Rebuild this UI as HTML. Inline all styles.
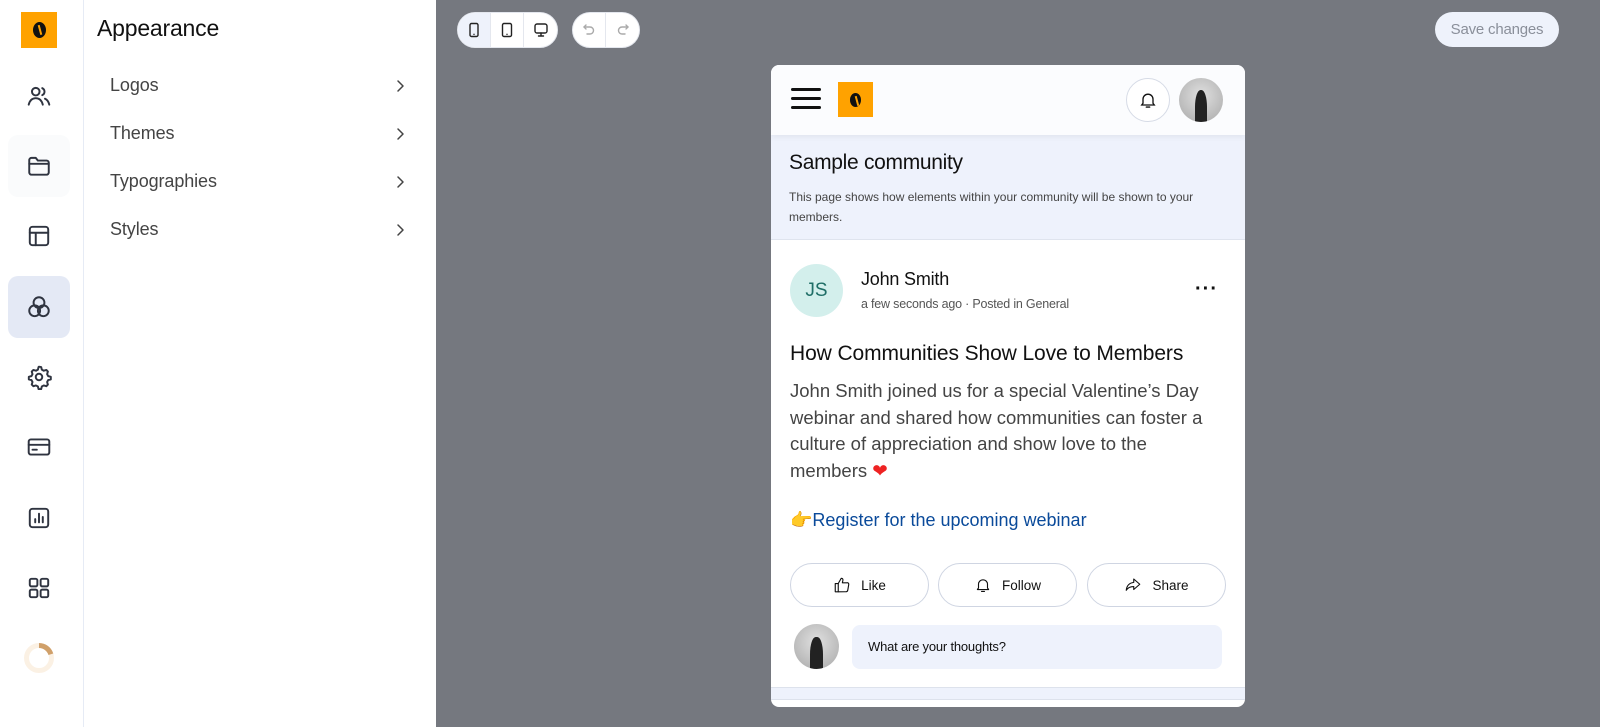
<!DOCTYPE html>
<html><head><meta charset="utf-8"><style>
*{box-sizing:border-box;margin:0;padding:0}
body{width:1600px;height:727px;overflow:hidden;font-family:"Liberation Sans",sans-serif;background:#75787f;position:relative}
.rail{position:absolute;left:0;top:0;width:84px;height:727px;background:#fff;border-right:1px solid #e6ebf5}
.panel{position:absolute;left:84px;top:0;width:352px;height:727px;background:#fff}
.ic{position:absolute;left:8px;width:62px;height:62px;border-radius:10px;display:flex;align-items:center;justify-content:center}
.ic svg{width:26px;height:26px;fill:none;stroke:#2f3440;stroke-width:1.8;stroke-linecap:round;stroke-linejoin:round}
.logo{position:absolute;left:21px;top:12px;width:36px;height:36px;background:#ffa200;display:flex;align-items:center;justify-content:center}
.bean{width:13px;height:16px;border-radius:50%;background:#111;position:relative}
.bean:after{content:"";position:absolute;left:6px;top:3px;width:1.5px;height:10px;background:#ffa200;transform:rotate(-15deg)}
h1{position:absolute;left:97px;top:15px;font-size:23px;font-weight:400;color:#111;letter-spacing:-.2px}
.item{position:absolute;left:110px;width:300px;font-size:18px;color:#444;letter-spacing:-.1px}
.item svg{position:absolute;right:5px;top:4px;width:10px;height:14px;fill:none;stroke:#444;stroke-width:1.5;stroke-linecap:round;stroke-linejoin:round}
.tb{position:absolute;top:12px;height:36px;background:#fff;border-radius:18px;display:flex;overflow:hidden;border:1px solid #e4e7ee}
.tb div{width:33px;height:34px;display:flex;align-items:center;justify-content:center;border-right:1px solid #e4e7ee}
.tb div:last-child{border-right:none}
.tb svg{width:16px;height:16px;fill:none;stroke:#222;stroke-width:1.4;stroke-linecap:round;stroke-linejoin:round}
.save{position:absolute;left:1435px;top:12px;width:124px;height:35px;border-radius:18px;background:#eef2fb;color:#8a8f9a;font-size:15px;display:flex;align-items:center;justify-content:center;letter-spacing:-.2px}
.phone{position:absolute;left:771px;top:65px;width:474px;height:642px;background:#fff;border-radius:8px;overflow:hidden}
.hdr{height:70px;background:#fbfcfe;position:relative;box-shadow:0 2px 6px rgba(0,0,0,.06)}
.ban{height:105px;background:#eef2fc;padding:16px 18px;border-bottom:1px solid #dfe4ee}
.ban .t{font-size:21px;color:#111;letter-spacing:-.3px}
.ban .d{font-size:12px;color:#444;line-height:20px;margin-top:12px;letter-spacing:0}
.btn{position:absolute;top:498px;width:139px;height:44px;border:1px solid #cfd5e2;border-radius:22px;display:flex;align-items:center;justify-content:center;gap:10px;font-size:13.5px;color:#111}
.btn svg{width:18px;height:18px;fill:none;stroke:#111;stroke-width:1.5;stroke-linecap:round;stroke-linejoin:round}
.av{border-radius:50%;background:radial-gradient(circle at 50% 40%,#e0e0e0,#a8a8a8);overflow:hidden;position:absolute}
.av:after{content:"";position:absolute;left:36%;top:28%;width:28%;height:85%;background:#222;border-radius:45% 45% 0 0}
</style></head><body>
<div class="rail">
<div class="logo"><div class="bean"></div></div>
<div class="ic" style="top:65px"><svg viewBox="0 0 24 24"><circle cx="9" cy="8" r="3.5"/><path d="M2.5 20c1-4 3.5-6 6.5-6s5.5 2 6.5 6"/><path d="M15 4.8a3.5 3.5 0 0 1 0 6.4"/><path d="M17.5 14.5c2 .8 3.3 2.7 4 5.5"/></svg></div>
<div class="ic" style="top:135px;background:#fafbfc"><svg viewBox="0 0 24 24"><path d="M3 6.5a2 2 0 0 1 2-2h4l2 2.5h8a2 2 0 0 1 2 2V18a2 2 0 0 1-2 2H5a2 2 0 0 1-2-2z"/><path d="M3 10h18"/></svg></div>
<div class="ic" style="top:205px"><svg viewBox="0 0 24 24"><rect x="3.5" y="3.5" width="17" height="17" rx="2.5"/><path d="M3.5 9h17M9 9v11.5"/></svg></div>
<div class="ic" style="top:276px;background:#e4e9f5"><svg viewBox="0 0 24 24"><circle cx="12" cy="8" r="5"/><circle cx="8" cy="15.5" r="5"/><circle cx="16" cy="15.5" r="5"/></svg></div>
<div class="ic" style="top:346px"><svg viewBox="0 0 24 24"><circle cx="12" cy="12" r="3"/><path d="M12 2.5l2 .3.6 2.4 1.8 1 2.4-.7 1.4 1.5-.7 2.4 1 1.8 2.4.6v2.4l-2.4.6-1 1.8.7 2.4-1.4 1.5-2.4-.7-1.8 1-.6 2.4h-2.4l-.6-2.4-1.8-1-2.4.7-1.5-1.5.7-2.4-1-1.8-2.4-.6v-2.4l2.4-.6 1-1.8-.7-2.4 1.5-1.5 2.4.7 1.8-1 .6-2.4z"/></svg></div>
<div class="ic" style="top:416px"><svg viewBox="0 0 24 24"><rect x="2.5" y="5" width="19" height="14" rx="2"/><path d="M2.5 10h19M6 14.5h4"/></svg></div>
<div class="ic" style="top:487px"><svg viewBox="0 0 24 24"><rect x="3.5" y="3.5" width="17" height="17" rx="2.5"/><path d="M8.5 16v-3M12 16V8M15.5 16v-5"/></svg></div>
<div class="ic" style="top:557px"><svg viewBox="0 0 24 24"><rect x="3.5" y="3.5" width="7" height="7" rx="1.5"/><rect x="13.5" y="3.5" width="7" height="7" rx="1.5"/><rect x="3.5" y="13.5" width="7" height="7" rx="1.5"/><rect x="13.5" y="13.5" width="7" height="7" rx="1.5"/></svg></div>
<div class="ic" style="top:627px"><svg viewBox="0 0 24 24" style="width:30px;height:30px"><circle cx="12" cy="12" r="10" stroke="#fbf1e4" stroke-width="4"/><path d="M12 2a10 10 0 0 1 9.5 7" stroke="#d0a06a" stroke-width="4" stroke-linecap="butt"/></svg></div>
</div>
<div class="panel"></div>
<h1>Appearance</h1>
<div class="item" style="top:75px">Logos<svg viewBox="0 0 10 14"><path d="M3 2l5 5-5 5"/></svg></div>
<div class="item" style="top:123px">Themes<svg viewBox="0 0 10 14"><path d="M3 2l5 5-5 5"/></svg></div>
<div class="item" style="top:171px">Typographies<svg viewBox="0 0 10 14"><path d="M3 2l5 5-5 5"/></svg></div>
<div class="item" style="top:219px">Styles<svg viewBox="0 0 10 14"><path d="M3 2l5 5-5 5"/></svg></div>

<div class="tb" style="left:457px"><div style="background:#eef2fb"><svg viewBox="0 0 16 16"><rect x="4" y="1.5" width="8" height="13" rx="1.5"/><path d="M8 12.3v.1"/></svg></div><div><svg viewBox="0 0 16 16"><rect x="3.5" y="1.5" width="9" height="13" rx="1.5"/><path d="M8 12.3v.1"/></svg></div><div><svg viewBox="0 0 16 16"><rect x="2" y="2" width="12" height="9" rx="2"/><path d="M8 11v3M5.5 14h5"/></svg></div></div>
<div class="tb" style="left:572px"><div><svg viewBox="0 0 16 16" style="stroke:#aaa"><path d="M5 3L3 5l2 2"/><path d="M3 5h6a3.5 3.5 0 0 1 0 7H6"/></svg></div><div><svg viewBox="0 0 16 16" style="stroke:#aaa"><path d="M11 3l2 2-2 2"/><path d="M13 5H7a3.5 3.5 0 0 0 0 7h3"/></svg></div></div>
<div class="save">Save changes</div>

<div class="phone">
<div class="hdr">
<div style="position:absolute;left:20px;top:23px;width:30px;height:3px;background:#111;border-radius:2px;box-shadow:0 9px 0 #111,0 18px 0 #111"></div>
<div style="position:absolute;left:67px;top:17px;width:35px;height:35px;background:#ffa200;display:flex;align-items:center;justify-content:center"><div class="bean" style="width:11px;height:14px"></div></div>
<div style="position:absolute;left:355px;top:13px;width:44px;height:44px;border-radius:50%;border:1px solid #d6dbe6;background:#fff;display:flex;align-items:center;justify-content:center"><svg viewBox="0 0 24 24" width="20" height="20" fill="none" stroke="#111" stroke-width="1.6" stroke-linecap="round"><path d="M6 16V11a6 6 0 0 1 12 0v5l1.5 2h-15z"/><path d="M10 20.5h4"/></svg></div>
<div class="av" style="left:408px;top:13px;width:44px;height:44px"></div>
</div>
<div class="ban"><div class="t">Sample community</div><div class="d">This page shows how elements within your community will be shown to your members.</div></div>
<div style="position:absolute;left:19px;top:199px;width:53px;height:53px;border-radius:50%;background:#d3efec;color:#1f6e67;font-size:19px;display:flex;align-items:center;justify-content:center">JS</div>
<div style="position:absolute;left:90px;top:204px;font-size:18px;color:#111;letter-spacing:-.2px">John Smith</div>
<div style="position:absolute;left:90px;top:232px;font-size:12.5px;color:#555;letter-spacing:-.2px">a few seconds ago · Posted in General</div>
<div style="position:absolute;left:424px;top:213px;font-size:20px;color:#111;letter-spacing:1px;font-weight:700">···</div>
<div style="position:absolute;left:19px;top:277px;font-size:21px;color:#111;letter-spacing:-.1px">How Communities Show Love to Members</div>
<div style="position:absolute;left:19px;top:313px;width:423px;font-size:18.5px;line-height:26.5px;color:#444;letter-spacing:0">John Smith joined us for a special Valentine’s Day webinar and shared how communities can foster a culture of appreciation and show love to the members <span style="color:#e22">❤</span></div>
<div style="position:absolute;left:19px;top:445px;font-size:18px;color:#0a4a9a;letter-spacing:0"><span style="color:#f5a623">👉</span>Register for the upcoming webinar</div>
<div class="btn" style="left:19px"><svg viewBox="0 0 24 24"><path d="M7 10v11H3V10z"/><path d="M7 10l4-7c1.5 0 2.5 1 2.2 2.7L12.5 9H19a2 2 0 0 1 2 2.3l-1.3 7.5A2.5 2.5 0 0 1 17.2 21H7"/></svg>Like</div>
<div class="btn" style="left:167px"><svg viewBox="0 0 24 24"><path d="M6 16V11a6 6 0 0 1 12 0v5l1.5 2h-15z"/><path d="M10 20.5h4"/></svg>Follow</div>
<div class="btn" style="left:316px"><svg viewBox="0 0 24 24"><path d="M13 4l8 7-8 7v-4c-5 0-8 1.5-10 5 .5-5 3-9.5 10-10.5z"/></svg>Share</div>
<div class="av" style="left:23px;top:559px;width:45px;height:45px"></div>
<div style="position:absolute;left:81px;top:560px;width:370px;height:44px;border-radius:8px;background:#eef2fc;font-size:13px;color:#111;padding:14px 16px;letter-spacing:-.2px">What are your thoughts?</div>
<div style="position:absolute;left:0;top:622px;width:474px;height:13px;background:#eef2fc;border-top:1px solid #dde2ec;border-bottom:1px solid #dde2ec"></div>
</div>
</body></html>
